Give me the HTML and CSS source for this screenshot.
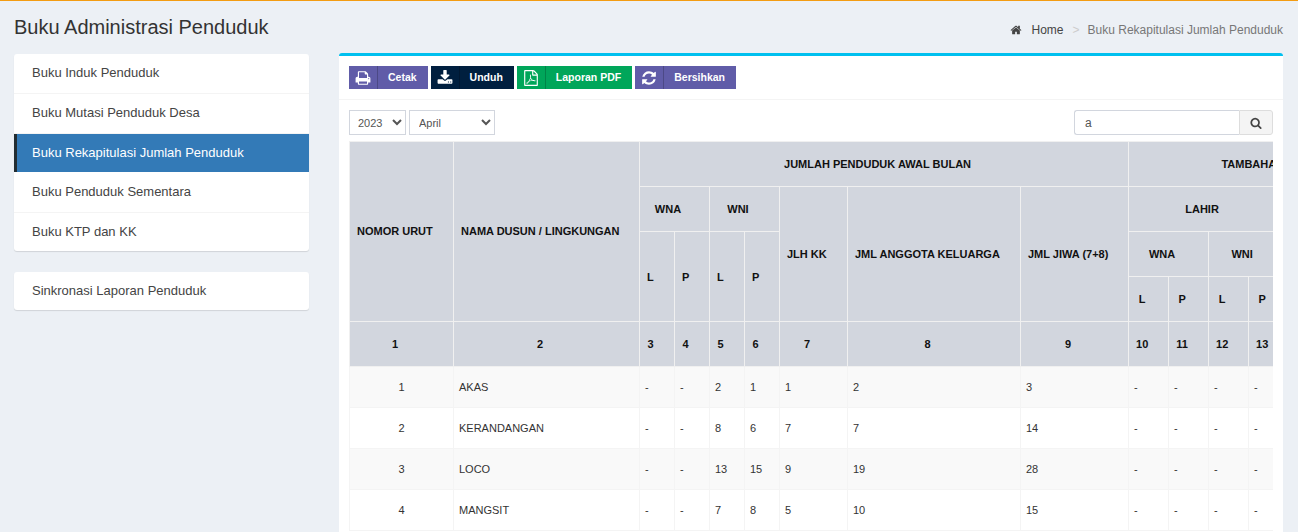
FILE: index.html
```html
<!DOCTYPE html>
<html lang="id">
<head>
<meta charset="utf-8">
<title>Buku Administrasi Penduduk</title>
<link rel="stylesheet" href="styles.css">
</head>
<body>
<header class="page-head">
  <h1 class="page-title">Buku Administrasi Penduduk</h1>
  <nav class="crumbs">
    <svg class="crumb-icon" viewBox="0 0 1792 1792"><path d="M1472 992v480q0 26-19 45t-45 19h-384v-384h-256v384h-384q-26 0-45-19t-19-45v-480q0-1 .5-3t.5-3l575-474 575 474q1 2 1 6zm223-69l-62 74q-8 9-21 11h-3q-13 0-21-7l-692-577-692 577q-12 8-24 7-13-2-21-11l-62-74q-8-10-7-23.500t11-21.500l719-599q32-26 76-26t76 26l244 204v-195q0-14 9-23t23-9h192q14 0 23 9t9 23v408l219 182q10 8 11 21.500t-7 23.500z"/></svg>
    <a class="crumb-link">Home</a>
    <span class="crumb-sep">&gt;</span>
    <span class="crumb-current">Buku Rekapitulasi Jumlah Penduduk</span>
  </nav>
</header>
<main class="layout">
  <aside class="side">
    <ul class="menu">
      <li class="menu-item">Buku Induk Penduduk</li>
      <li class="menu-item">Buku Mutasi Penduduk Desa</li>
      <li class="menu-item menu-active">Buku Rekapitulasi Jumlah Penduduk</li>
      <li class="menu-item menu-tall">Buku Penduduk Sementara</li>
      <li class="menu-item menu-last">Buku KTP dan KK</li>
    </ul>
    <ul class="menu">
      <li class="menu-item menu-single">Sinkronasi Laporan Penduduk</li>
    </ul>
  </aside>
  <section class="panel">
    <div class="toolbar">
      <a class="btn btn-purple"><span class="btn-icon"><svg viewBox="0 0 1792 1792"><path d="M448 1536h896v-256h-896v256zm0-640h896v-384h-160q-40 0-68-28t-28-68v-160h-640v640zm1152 64q0-26-19-45t-45-19-45 19-19 45 19 45 45 19 45-19 19-45zm128 0v416q0 13-9.500 22.500t-22.500 9.500h-224v160q0 40-28 68t-68 28h-960q-40 0-68-28t-28-68v-160h-224q-13 0-22.500-9.500t-9.500-22.500v-416q0-79 56.500-135.500t135.500-56.500h64v-544q0-40 28-68t68-28h672q40 0 88 20t76 48l152 152q28 28 48 76t20 88v256h64q79 0 135.500 56.500t56.500 135.500z"/></svg></span>Cetak</a>
      <a class="btn btn-navy"><span class="btn-icon"><svg viewBox="0 0 1792 1792"><path d="M1344 1344q0-26-19-45t-45-19-45 19-19 45 19 45 45 19 45-19 19-45zm256 0q0-26-19-45t-45-19-45 19-19 45 19 45 45 19 45-19 19-45zm128-224v320q0 40-28 68t-68 28h-1472q-40 0-68-28t-28-68v-320q0-40 28-68t68-28h465l135 136q58 56 136 56t136-56l136-136h464q40 0 68 28t28 68zm-325-569q17 41-14 70l-448 448q-18 19-45 19t-45-19l-448-448q-31-29-14-70 17-39 59-39h256v-448q0-26 19-45t45-19h256q26 0 45 19t19 45v448h256q42 0 59 39z"/></svg></span>Unduh</a>
      <a class="btn btn-green"><span class="btn-icon"><svg viewBox="0 0 1792 1792"><path d="M1596 380q28 28 48 76t20 88v1152q0 40-28 68t-68 28h-1344q-40 0-68-28t-28-68v-1600q0-40 28-68t68-28h896q40 0 88 20t76 48zm-444-244v376h376q-10-29-22-41l-313-313q-12-12-41-22zm384 1528v-1024h-416q-40 0-68-28t-28-68v-416h-768v1536h1280zm-514-593q33 26 84 56 59-7 117-7 147 0 177 49 16 22 2 52 0 1-1 2l-2 2v1q-6 38-71 38-48 0-115-20t-130-53q-221 24-392 83-153 262-242 262-15 0-28-7l-24-12q-1-1-6-5-10-10-6-36 9-40 56-91.500t132-96.500q14-9 23 6 2 2 2 4 52-85 107-197 68-136 104-262-24-82-30.500-159.500t6.500-127.500q11-40 42-40h22q23 0 35 15 18 21 9 68-2 6-4 8 1 3 1 8v30q-2 123-14 192 55 164 146 238zm-576 411q52-24 137-158-51 40-87.500 84t-49.500 74zm398-920q-15 42-2 132 1-7 7-44 0-3 7-43 1-4 4-8-1-1-1-2-1-2-1-3-1-22-13-36 0 1-1 2v2zm-124 661q135-54 284-81-2-1-13-9.500t-16-13.500q-76-67-127-176-27 86-83 197-30 56-45 83zm646-16q-24-24-140-24 76 28 124 28 14 0 18-1 0-1-2-3z"/></svg></span>Laporan PDF</a>
      <a class="btn btn-purple"><span class="btn-icon"><svg viewBox="0 0 1792 1792"><path d="M1639 1056q0 5-1 7-64 268-268 434.500t-478 166.500q-146 0-282.500-55t-243.500-157l-129 129q-19 19-45 19t-45-19-19-45v-448q0-26 19-45t45-19h448q26 0 45 19t19 45-19 45l-137 137q71 66 161 102t187 36q134 0 250-65t186-179q11-17 53-117 8-23 30-23h192q13 0 22.500 9.500t9.500 22.500zm25-800v448q0 26-19 45t-45 19h-448q-26 0-45-19t-19-45 19-45l138-138q-148-137-349-137-134 0-250 65t-186 179q-11 17-53 117-8 23-30 23h-199q-13 0-22.500-9.500t-9.500-22.500v-7q65-268 270-434.500t480-166.500q146 0 284 55.500t245 156.500l130-129q19-19 45-19t45 19 19 45z"/></svg></span>Bersihkan</a>
    </div>
    <div class="panel-body">
      <div class="filters">
        <div class="selects">
          <select class="select select-year"><option>2023</option></select>
          <select class="select select-month"><option>April</option></select>
        </div>
        <div class="search">
          <input class="search-input" type="text" value="a">
          <button class="search-btn" type="button"><svg viewBox="0 0 1792 1792"><path d="M1216 832q0-185-131.500-316.500t-316.500-131.500-316.500 131.500-131.500 316.500 131.500 316.500 316.500 131.500 316.500-131.500 131.500-316.500zm512 832q0 52-38 90t-90 38q-54 0-90-38l-343-342q-179 124-399 124-143 0-273.500-55.500t-225-150-150-225-55.500-273.500 55.500-273.500 150-225 225-150 273.500-55.500 273.500 55.500 225 150 150 225 55.500 273.500q0 220-124 399l343 343q37 37 37 90z"/></svg></button>
        </div>
      </div>
      <div class="table-wrap">
        <table class="data">
          <colgroup>
            <col class="c-no"><col class="c-name">
            <col class="c-sm"><col class="c-sm"><col class="c-sm"><col class="c-sm">
            <col class="c-kk"><col class="c-ak"><col class="c-jw">
            <col class="c-md"><col class="c-md"><col class="c-md"><col class="c-md">
            <col class="c-md"><col class="c-md"><col class="c-md"><col class="c-md">
          </colgroup>
          <thead>
            <tr>
              <th rowspan="4" class="th-left th-raise">NOMOR URUT</th>
              <th rowspan="4" class="th-left th-raise">NAMA DUSUN / LINGKUNGAN</th>
              <th colspan="7">JUMLAH PENDUDUK AWAL BULAN</th>
              <th colspan="8">TAMBAHAN BULAN INI</th>
            </tr>
            <tr>
              <th colspan="2">WNA</th>
              <th colspan="2">WNI</th>
              <th rowspan="3" class="th-left">JLH KK</th>
              <th rowspan="3" class="th-left">JML ANGGOTA KELUARGA</th>
              <th rowspan="3" class="th-left">JML JIWA (7+8)</th>
              <th colspan="4">LAHIR</th>
              <th colspan="4">DATANG</th>
            </tr>
            <tr>
              <th rowspan="2" class="th-left">L</th>
              <th rowspan="2" class="th-left">P</th>
              <th rowspan="2" class="th-left">L</th>
              <th rowspan="2" class="th-left">P</th>
              <th colspan="2">WNA</th>
              <th colspan="2">WNI</th>
              <th colspan="2">WNA</th>
              <th colspan="2">WNI</th>
            </tr>
            <tr>
              <th>L</th><th>P</th><th>L</th><th>P</th><th>L</th><th>P</th><th>L</th><th>P</th>
            </tr>
            <tr>
              <th>1</th><th>2</th><th>3</th><th>4</th><th>5</th><th>6</th><th>7</th><th>8</th><th>9</th>
              <th>10</th><th>11</th><th>12</th><th>13</th><th>14</th><th>15</th><th>16</th><th>17</th>
            </tr>
          </thead>
          <tbody>
            <tr class="odd">
              <td class="center">1</td><td>AKAS</td><td>-</td><td>-</td><td>2</td><td>1</td><td>1</td><td>2</td><td>3</td>
              <td>-</td><td>-</td><td>-</td><td>-</td><td>-</td><td>-</td><td>-</td><td>-</td>
            </tr>
            <tr>
              <td class="center">2</td><td>KERANDANGAN</td><td>-</td><td>-</td><td>8</td><td>6</td><td>7</td><td>7</td><td>14</td>
              <td>-</td><td>-</td><td>-</td><td>-</td><td>-</td><td>-</td><td>-</td><td>-</td>
            </tr>
            <tr class="odd">
              <td class="center">3</td><td>LOCO</td><td>-</td><td>-</td><td>13</td><td>15</td><td>9</td><td>19</td><td>28</td>
              <td>-</td><td>-</td><td>-</td><td>-</td><td>-</td><td>-</td><td>-</td><td>-</td>
            </tr>
            <tr>
              <td class="center">4</td><td>MANGSIT</td><td>-</td><td>-</td><td>7</td><td>8</td><td>5</td><td>10</td><td>15</td>
              <td>-</td><td>-</td><td>-</td><td>-</td><td>-</td><td>-</td><td>-</td><td>-</td>
            </tr>
          </tbody>
        </table>
      </div>
    </div>
  </section>
</main>
</body>
</html>
```
FILE: styles.css
```css
* { box-sizing: border-box; }
html, body { height: 532px; overflow: hidden; }
body {
  margin: 0;
  background: #ecf0f5;
  border-top: 1px solid #f39c12;
  font-family: "Liberation Sans", Arial, sans-serif;
  font-size: 12px;
  color: #333;
}
.page-head {
  display: flex;
  justify-content: space-between;
  align-items: flex-start;
  height: 52px;
  padding: 15px 15px 0 14px;
}
.page-title {
  margin: 0;
  font-size: 20px;
  font-weight: 400;
  line-height: 22px;
  color: #333;
}
.crumbs {
  display: flex;
  align-items: center;
  height: 14px;
  margin-top: 7px;
  font-size: 12px;
}
.crumb-icon { width: 12px; height: 12px; fill: #444; margin-right: 10px; }
.crumb-link { color: #444; }
.crumb-sep { color: #ccc; margin: 0 8px 0 9px; }
.crumb-current { color: #777; }

.layout {
  display: grid;
  grid-template-columns: 295px 944px;
  column-gap: 30px;
  padding-left: 14px;
}
.side { display: flex; flex-direction: column; gap: 21px; padding-top: 1px; }
.menu {
  margin: 0;
  padding: 0;
  list-style: none;
  background: #fff;
  border-radius: 3px;
  box-shadow: 0 1px 1px rgba(0, 0, 0, .12);
}
.menu-item {
  display: flex;
  align-items: center;
  height: 40px;
  padding: 0 18px 2px;
  border-bottom: 1px solid #f4f4f4;
  font-size: 13px;
  color: #444;
}
.menu-active {
  height: 38px;
  padding-left: 15px;
  background: #337ab7;
  border-bottom: 0;
  border-left: 3px solid #222d32;
  color: #fff;
}
.menu-tall { height: 41px; }
.menu-last { height: 38px; border-bottom: 0; padding-bottom: 1px; }
.menu-single { height: 38px; border-bottom: 0; }

.panel {
  height: 479px;
  background: #fff;
  border-top: 3px solid #00c0ef;
  border-radius: 3px 3px 0 0;
}
.toolbar {
  display: flex;
  gap: 3px;
  height: 44px;
  padding: 10px 10px 0;
  border-bottom: 1px solid #f4f4f4;
}
.btn {
  position: relative;
  display: block;
  height: 23px;
  padding: 0 11px 0 39px;
  font-size: 10.5px;
  font-weight: 700;
  line-height: 23px;
  color: #fff;
}
.btn-icon {
  position: absolute;
  left: 0;
  top: 0;
  display: flex;
  align-items: center;
  justify-content: center;
  width: 29px;
  height: 23px;
  border-right: 1px solid rgba(0, 0, 0, .2);
}
.btn-icon svg { width: 16px; height: 16px; fill: #fff; }
.btn-purple { background: #605ca8; }
.btn-navy { background: #001f3f; }
.btn-green { background: #00a65a; }

.panel-body { padding: 10px 10px 0; }
.filters {
  display: flex;
  justify-content: space-between;
  height: 25px;
  margin-bottom: 6px;
}
.selects { display: flex; gap: 3px; }
.select {
  height: 25px;
  border: 1px solid #d2d6de;
  background: #fff;
  font-family: inherit;
  font-size: 11px;
  color: #555;
  padding: 0 4px;
  border-radius: 0;
}
.select-year { width: 57px; }
.select-month { width: 86px; padding-left: 5px; }
.search { display: flex; width: 199px; }
.search-input {
  width: 165px;
  height: 25px;
  padding: 0 10px;
  border: 1px solid #d2d6de;
  border-right: 0;
  border-radius: 3px 0 0 3px;
  font-family: inherit;
  font-size: 12px;
  color: #555;
  outline: 0;
}
.search-btn {
  display: flex;
  align-items: center;
  justify-content: center;
  width: 34px;
  height: 25px;
  padding: 0;
  background: #f4f4f4;
  border: 1px solid #ddd;
  border-radius: 0 3px 3px 0;
}
.search-btn svg { width: 12px; height: 12px; fill: #444; }

.table-wrap { width: 924px; overflow: hidden; }
.data {
  width: 1100px;
  table-layout: fixed;
  border-collapse: collapse;
  font-size: 11px;
}
.c-no { width: 104px; }
.c-name { width: 186px; }
.c-sm { width: 35px; }
.c-kk { width: 68px; }
.c-ak { width: 173px; }
.c-jw { width: 108px; }
.c-md { width: 40px; }
.data th {
  height: 45px;
  padding: 0 20px 0 7px;
  background: #d2d6de;
  border: 1px solid #f0f0f0;
  font-weight: 700;
  color: #111;
  text-align: center;
  vertical-align: middle;
  white-space: nowrap;
  overflow: hidden;
}
.data .th-left { text-align: left; }
.data .th-raise { padding-bottom: 2px; }
.data td {
  height: 41px;
  padding: 0 5px;
  border: 1px solid #f4f4f4;
  color: #333;
  white-space: nowrap;
}
.data .center { text-align: center; }
.odd td { background: #f9f9f9; }
```
